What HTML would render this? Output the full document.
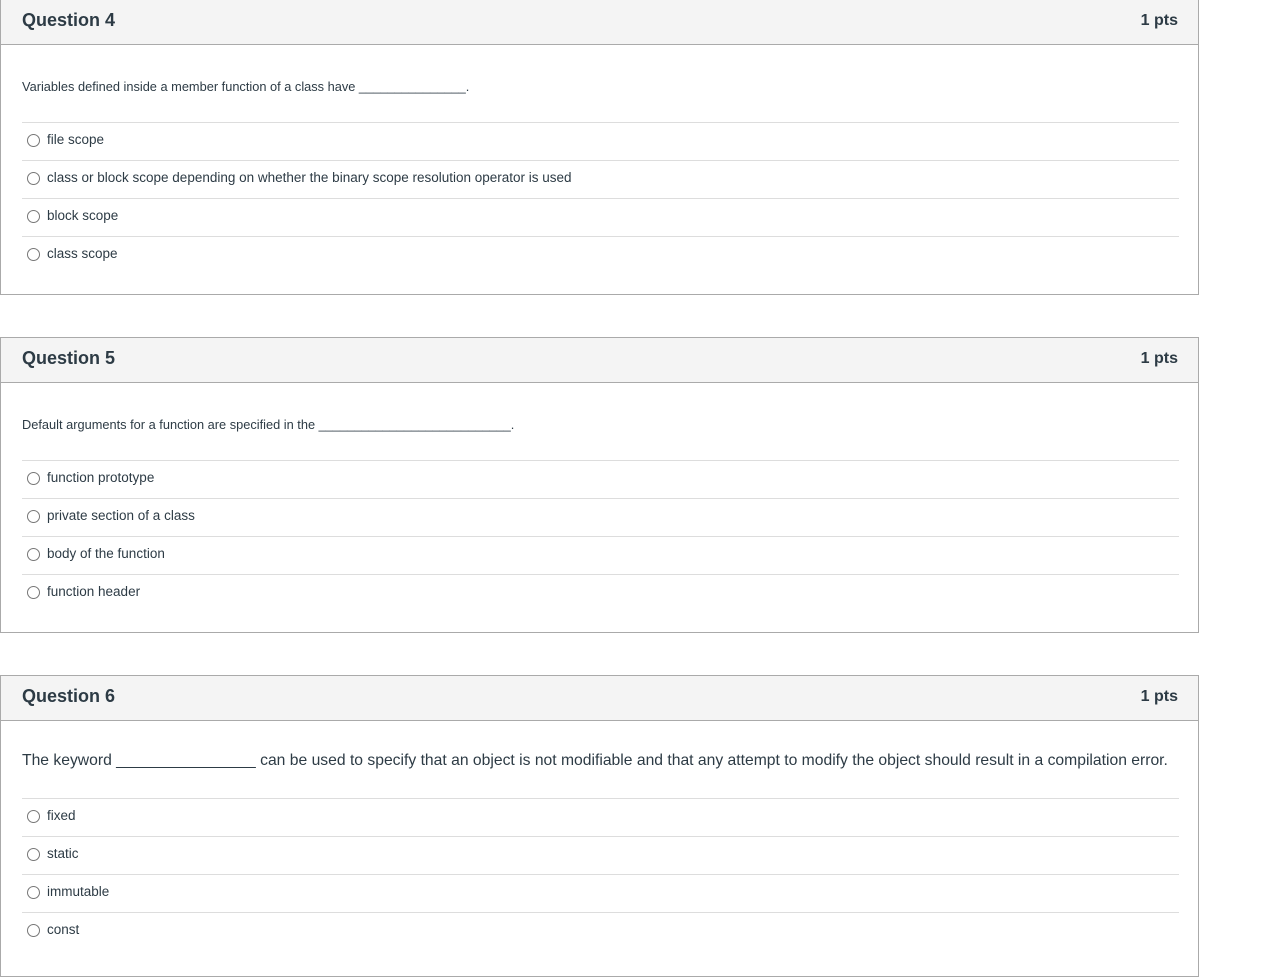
<!DOCTYPE html>
<html><head><style>
body{margin:0;background:#fff;font-family:"Liberation Sans",sans-serif;color:#2d3b45;overflow:hidden;}
.q{position:absolute;left:0;width:1197px;border:1px solid #aaa;box-sizing:content-box;}
.h{height:44px;background:#f4f4f4;border-bottom:1px solid #aaa;position:relative;}
.h .t{position:absolute;left:21px;top:10px;font-size:18px;font-weight:bold;color:#2d3b45;}
.h .p{position:absolute;right:20px;top:12px;font-size:16px;font-weight:bold;color:#2d3b45;}
.txt{position:absolute;left:21px;font-size:12.8px;}
.opt{position:absolute;left:21px;width:1157px;height:38px;border-top:1px solid #ddd;font-size:13.5px;}
.opt span{position:absolute;left:25px;top:9px;}
.opt i{position:absolute;left:5px;top:11px;width:11px;height:11px;border:1px solid #777;border-radius:50%;}
</style></head><body>

<div class="q" style="top:-1px;height:294px">
 <div class="h"><div class="t">Question 4</div><div class="p">1 pts</div></div>
 <div class="txt" style="top:79px">Variables defined inside a member function of a class have _______________.</div>
 <div class="opt" style="top:122px"><i></i><span>file scope</span></div>
 <div class="opt" style="top:160px"><i></i><span>class or block scope depending on whether the binary scope resolution operator is used</span></div>
 <div class="opt" style="top:198px"><i></i><span>block scope</span></div>
 <div class="opt" style="top:236px"><i></i><span>class scope</span></div>
</div>

<div class="q" style="top:337px;height:294px">
 <div class="h"><div class="t">Question 5</div><div class="p">1 pts</div></div>
 <div class="txt" style="top:79px">Default arguments for a function are specified in the ___________________________.</div>
 <div class="opt" style="top:122px"><i></i><span>function prototype</span></div>
 <div class="opt" style="top:160px"><i></i><span>private section of a class</span></div>
 <div class="opt" style="top:198px"><i></i><span>body of the function</span></div>
 <div class="opt" style="top:236px"><i></i><span>function header</span></div>
</div>

<div class="q" style="top:675px;height:300px">
 <div class="h"><div class="t">Question 6</div><div class="p">1 pts</div></div>
 <div class="txt" style="top:76px;font-size:15.7px">The keyword ________________ can be used to specify that an object is not modifiable and that any attempt to modify the object should result in a compilation error.</div>
 <div class="opt" style="top:122px"><i></i><span>fixed</span></div>
 <div class="opt" style="top:160px"><i></i><span>static</span></div>
 <div class="opt" style="top:198px"><i></i><span>immutable</span></div>
 <div class="opt" style="top:236px"><i></i><span>const</span></div>
</div>
</body></html>
